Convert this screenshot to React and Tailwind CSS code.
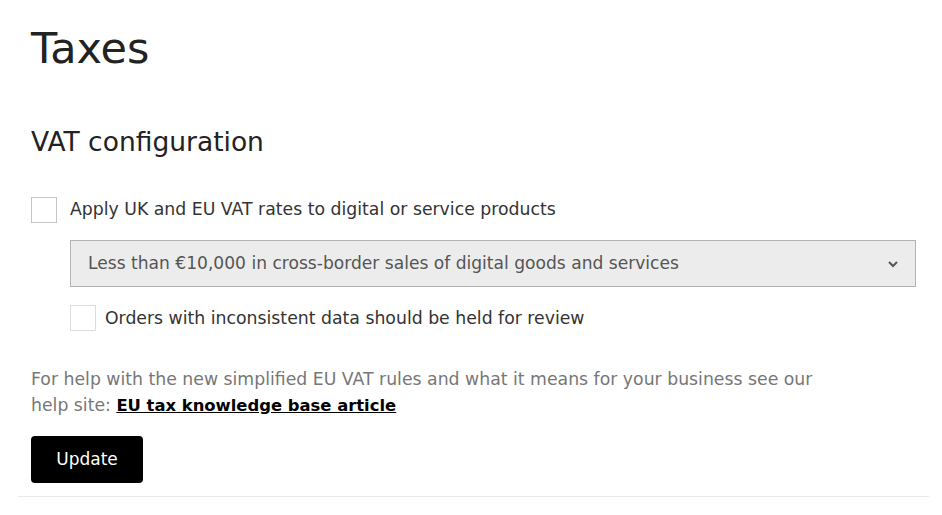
import React from "react";

export default function App() {
  return (
    <div className="w-[942px] h-[515px] bg-white overflow-hidden">
      <div className="pl-[18px] pr-[13px]" style={{ fontFamily: '"DejaVu Sans", "Open Sans", sans-serif' }}>
        <div className="pl-[13px] pr-[13px] pt-[22px]">
          <h1 className="text-[43px] leading-[52px] text-[#222] font-normal">Taxes</h1>
          <h2 className="mt-[52px] text-[26.5px] leading-[32px] text-[#222] font-normal">VAT configuration</h2>
          <div className="mt-[39px] flex items-center gap-[13px]">
            <div className="w-[26px] h-[26px] border border-[#c4c4c4] bg-white" />
            <span className="text-[17.3px] text-[#333]">Apply UK and EU VAT rates to digital or service products</span>
          </div>
          <div className="ml-[39px] mt-[17px]">
            <div className="h-[47px] border border-[#b3b3b3] bg-[#ececec] flex items-center justify-between pl-[17px] pr-[16px]">
              <span className="text-[17.1px] text-[#555]">Less than €10,000 in cross-border sales of digital goods and services</span>
              <svg width="12" height="8" viewBox="0 0 12 8" fill="none" stroke="#555" strokeWidth="2"><path d="M2 2l4 4 4-4" /></svg>
            </div>
            <div className="mt-[17px] flex items-center gap-[9px]">
              <div className="w-[26px] h-[26px] border border-[#dcdcdc] bg-white" />
              <span className="text-[17.3px] leading-[26px] pt-[1px] text-[#333]">Orders with inconsistent data should be held for review</span>
            </div>
          </div>
          <p className="mt-[35px] max-w-[800px] text-[17.3px] leading-[26px] text-[#777]">
            For help with the new simplified EU VAT rules and what it means for your business see our help site:{" "}
            <a className="text-black text-[16.4px] leading-[22px] font-bold underline">EU tax knowledge base article</a>
          </p>
          <button className="mt-[18px] h-[47px] w-[112px] bg-black text-white rounded-[4px] text-[17px]">Update</button>
        </div>
        <div className="mt-[13px] h-px bg-[#eaeaea]" />
      </div>
    </div>
  );
}
